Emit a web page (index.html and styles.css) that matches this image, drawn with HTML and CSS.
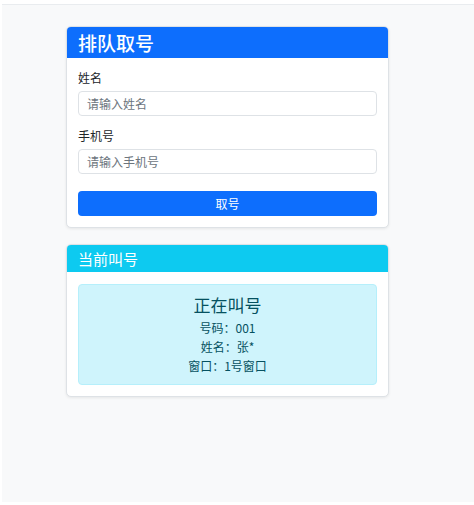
FILE: index.html
```html
<!DOCTYPE html>
<html lang="zh-CN">

<head>
    <meta charset="UTF-8">
    <meta name="viewport" content="width=device-width, initial-scale=1.0">
    <title>排队取号</title>
    <link rel="stylesheet" href="styles.css">
</head>

<body>
    <div class="page">
        <div class="container">
            <div class="card">
                <div class="card-header primary">
                    <h2>排队取号</h2>
                </div>
                <div class="card-body">
                    <form>
                        <div class="field">
                            <label for="name">姓名</label>
                            <input id="name" type="text" placeholder="请输入姓名">
                        </div>
                        <div class="field">
                            <label for="phone">手机号</label>
                            <input id="phone" type="text" placeholder="请输入手机号">
                        </div>
                        <button type="button" class="btn">取号</button>
                    </form>
                </div>
            </div>

            <div class="card">
                <div class="card-header info">
                    <h3>当前叫号</h3>
                </div>
                <div class="card-body">
                    <div class="alert">
                        <h4>正在叫号</h4>
                        <p>号码：001</p>
                        <p>姓名：张*</p>
                        <p>窗口：1号窗口</p>
                    </div>
                </div>
            </div>
        </div>
    </div>
</body>

</html>
```

FILE: styles.css
```css
body {
    font-family: "Noto Sans CJK SC", "Noto Sans", sans-serif;
    background-color: #ffffff;
    color: #212529;
    margin: 0;
    padding: 0;
}

.page {
    margin: 4px 0 0 2px;
    height: 497px;
    background-color: #f8f9fa;
    border-top: 1px solid #e9ecef;
}

.container {
    width: 323px;
    padding: 21px 0 0 64px;
}

.card {
    background-color: #ffffff;
    border: 1px solid #dee2e6;
    border-radius: 5px;
    box-shadow: 0 1px 3px rgba(0, 0, 0, 0.08);
    overflow: hidden;
    margin-bottom: 16px;
}

.card-header {
    color: #ffffff;
    padding: 0 11px;
    display: flex;
    align-items: center;
}

.card-header.primary {
    background-color: #0d6efd;
    height: 31px;
}

.card-header.info {
    background-color: #0dcaf0;
    height: 27px;
}

.card-header h2 {
    margin: 0;
    font-size: 19px;
    font-weight: 500;
}

.card-header h3 {
    margin: 0;
    font-size: 15px;
    font-weight: 400;
}

.card-body {
    padding: 12px 11px 11px;
}

.field {
    margin-bottom: 12px;
}

label {
    display: block;
    font-size: 12px;
    line-height: 15px;
    margin-bottom: 6px;
}

input[type="text"] {
    display: block;
    box-sizing: border-box;
    width: 100%;
    height: 25px;
    padding: 0 8px;
    border: 1px solid #dee2e6;
    border-radius: 4px;
    font-family: inherit;
    font-size: 12px;
    color: #212529;
}

input::placeholder {
    color: #6c757d;
}

.btn {
    display: block;
    width: 100%;
    height: 25px;
    margin-top: 17px;
    border: none;
    border-radius: 4px;
    background-color: #0d6efd;
    color: #ffffff;
    font-family: inherit;
    font-size: 12px;
    cursor: pointer;
}

.alert {
    background-color: #cff4fc;
    border: 1px solid #b6effb;
    border-radius: 4px;
    color: #055160;
    text-align: center;
    padding: 9px 0;
}

.alert h4 {
    margin: 0 0 2px;
    font-size: 17px;
    font-weight: 400;
    line-height: 22px;
}

.alert p {
    margin: 0;
    font-size: 12px;
    line-height: 19px;
}
```
